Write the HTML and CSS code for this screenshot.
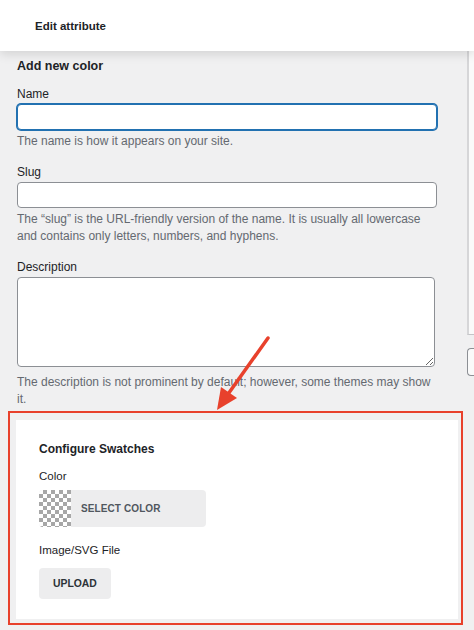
FILE: index.html
```html
<!DOCTYPE html>
<html lang="en">
<head>
<meta charset="utf-8">
<title>Edit attribute</title>
<link rel="stylesheet" href="styles.css">
</head>
<body>
<header class="topbar">Edit attribute</header>
<div class="main">
  <form class="form">
    <h2 class="form-title">Add new color</h2>
    <div class="field">
      <label class="label" for="name">Name</label>
      <input class="input input-focus" id="name" type="text">
      <p class="help">The name is how it appears on your site.</p>
    </div>
    <div class="field">
      <label class="label" for="slug">Slug</label>
      <input class="input" id="slug" type="text">
      <p class="help">The “slug” is the URL-friendly version of the name. It is usually all lowercase and contains only letters, numbers, and hyphens.</p>
    </div>
    <div class="field">
      <label class="label" for="desc">Description</label>
      <textarea class="textarea" id="desc"></textarea>
      <p class="help help-desc">The description is not prominent by default; however, some themes may show it.</p>
    </div>
    <div class="card">
      <h3 class="card-title">Configure Swatches</h3>
      <div class="card-label">Color</div>
      <button type="button" class="color-btn"><span class="checker"></span><span class="color-btn-text">SELECT COLOR</span></button>
      <div class="card-label card-label-2">Image/SVG File</div>
      <button type="button" class="upload-btn">UPLOAD</button>
    </div>
  </form>
  <aside class="side">
    <div class="side-panel"></div>
    <div class="side-box"></div>
  </aside>
</div>
<div class="annot-box"></div>
<svg class="annot-arrow" width="474" height="630" viewBox="0 0 474 630">
  <line x1="268" y1="338" x2="226" y2="397" stroke="#e8412c" stroke-width="3.5" stroke-linecap="round"/>
  <polygon points="217,410 237,398 221,387" fill="#e8412c"/>
</svg>
</body>
</html>
```
FILE: styles.css
```css
* { box-sizing: border-box; }
html, body { margin: 0; padding: 0; }
body {
  width: 474px;
  height: 630px;
  overflow: hidden;
  background: #f0f0f1;
  font-family: "Liberation Sans", Arial, sans-serif;
  color: #1d2327;
  position: relative;
}
.topbar {
  position: relative;
  z-index: 2;
  height: 51px;
  background: #fff;
  padding-left: 35px;
  display: flex;
  align-items: center;
  font-size: 11.5px;
  font-weight: 700;
  color: #1d2327;
  box-shadow: 0 3px 10px rgba(0,0,0,0.13);
}
.main {
  display: flex;
  height: 579px;
}
.form {
  width: 467px;
  flex: none;
  margin: 0;
  padding: 5px 0 0 16px;
}
.form-title {
  margin: 0 0 0 1px;
  font-size: 12.5px;
  line-height: 20px;
  font-weight: 700;
}
.field {
  margin-top: 10px;
  padding-left: 1px;
}
.field + .field { margin-top: 14px; }
.label {
  display: block;
  font-size: 12px;
  line-height: 17px;
}
.input {
  display: block;
  width: 420px;
  height: 26px;
  margin: 1px 0 0;
  border: 1px solid #8c8f94;
  border-radius: 4px;
  background: #fff;
  font: inherit;
}
.input-focus {
  border-color: #2271b1;
  box-shadow: 0 0 0 1px #2271b1;
}
.textarea {
  display: block;
  width: 418px;
  height: 90px;
  margin: 1px 0 0;
  border: 1px solid #8c8f94;
  border-radius: 4px;
  background: #fff;
  resize: vertical;
  font: inherit;
}
.help {
  margin: 3px 0 0;
  font-size: 12px;
  line-height: 17px;
  color: #646970;
  width: 420px;
}
.help-desc { margin-top: 7px; }
.card {
  margin-top: 12px;
  width: 442px;
  height: 199px;
  background: #fff;
  padding: 19px 23px 0;
}
.card-title {
  margin: 0;
  font-size: 12px;
  line-height: 20px;
  font-weight: 700;
}
.card-label {
  margin-top: 9px;
  font-size: 11.5px;
  line-height: 17px;
}
.card-label-2 { margin-top: 15px; }
.color-btn {
  display: flex;
  align-items: center;
  margin-top: 5px;
  width: 167px;
  height: 37px;
  padding: 0;
  border: 0;
  border-radius: 4px;
  background: #ededee;
  overflow: hidden;
  font-family: inherit;
  cursor: pointer;
}
.checker {
  width: 32px;
  height: 37px;
  flex: none;
  background: repeating-conic-gradient(#a7a7a7 0 25%, #fff 0 50%) 0 0 / 8px 8px;
}
.color-btn-text {
  margin-left: 10px;
  font-size: 10px;
  font-weight: 700;
  color: #50575e;
  letter-spacing: 0.1px;
}
.upload-btn {
  display: block;
  margin-top: 9px;
  height: 31px;
  padding: 0 14px;
  border: 0;
  border-radius: 4px;
  background: #ededee;
  font-family: inherit;
  font-size: 10.4px;
  font-weight: 700;
  color: #2c3338;
}
.side {
  flex: 1;
}
.side-panel {
  height: 284px;
  background: #fafafa;
  border-left: 2px solid #d6d6d8;
  border-bottom: 1px solid #c3c4c7;
}
.side-box {
  margin-top: 13px;
  height: 28px;
  background: #fafafa;
  border: 1px solid #8c8f94;
  border-right: 0;
  border-radius: 4px 0 0 4px;
}
.annot-box {
  position: absolute;
  left: 8px;
  top: 411px;
  width: 455px;
  height: 214px;
  border: 2px solid #e8412c;
  pointer-events: none;
}
.annot-arrow {
  position: absolute;
  left: 0;
  top: 0;
  pointer-events: none;
}
```
